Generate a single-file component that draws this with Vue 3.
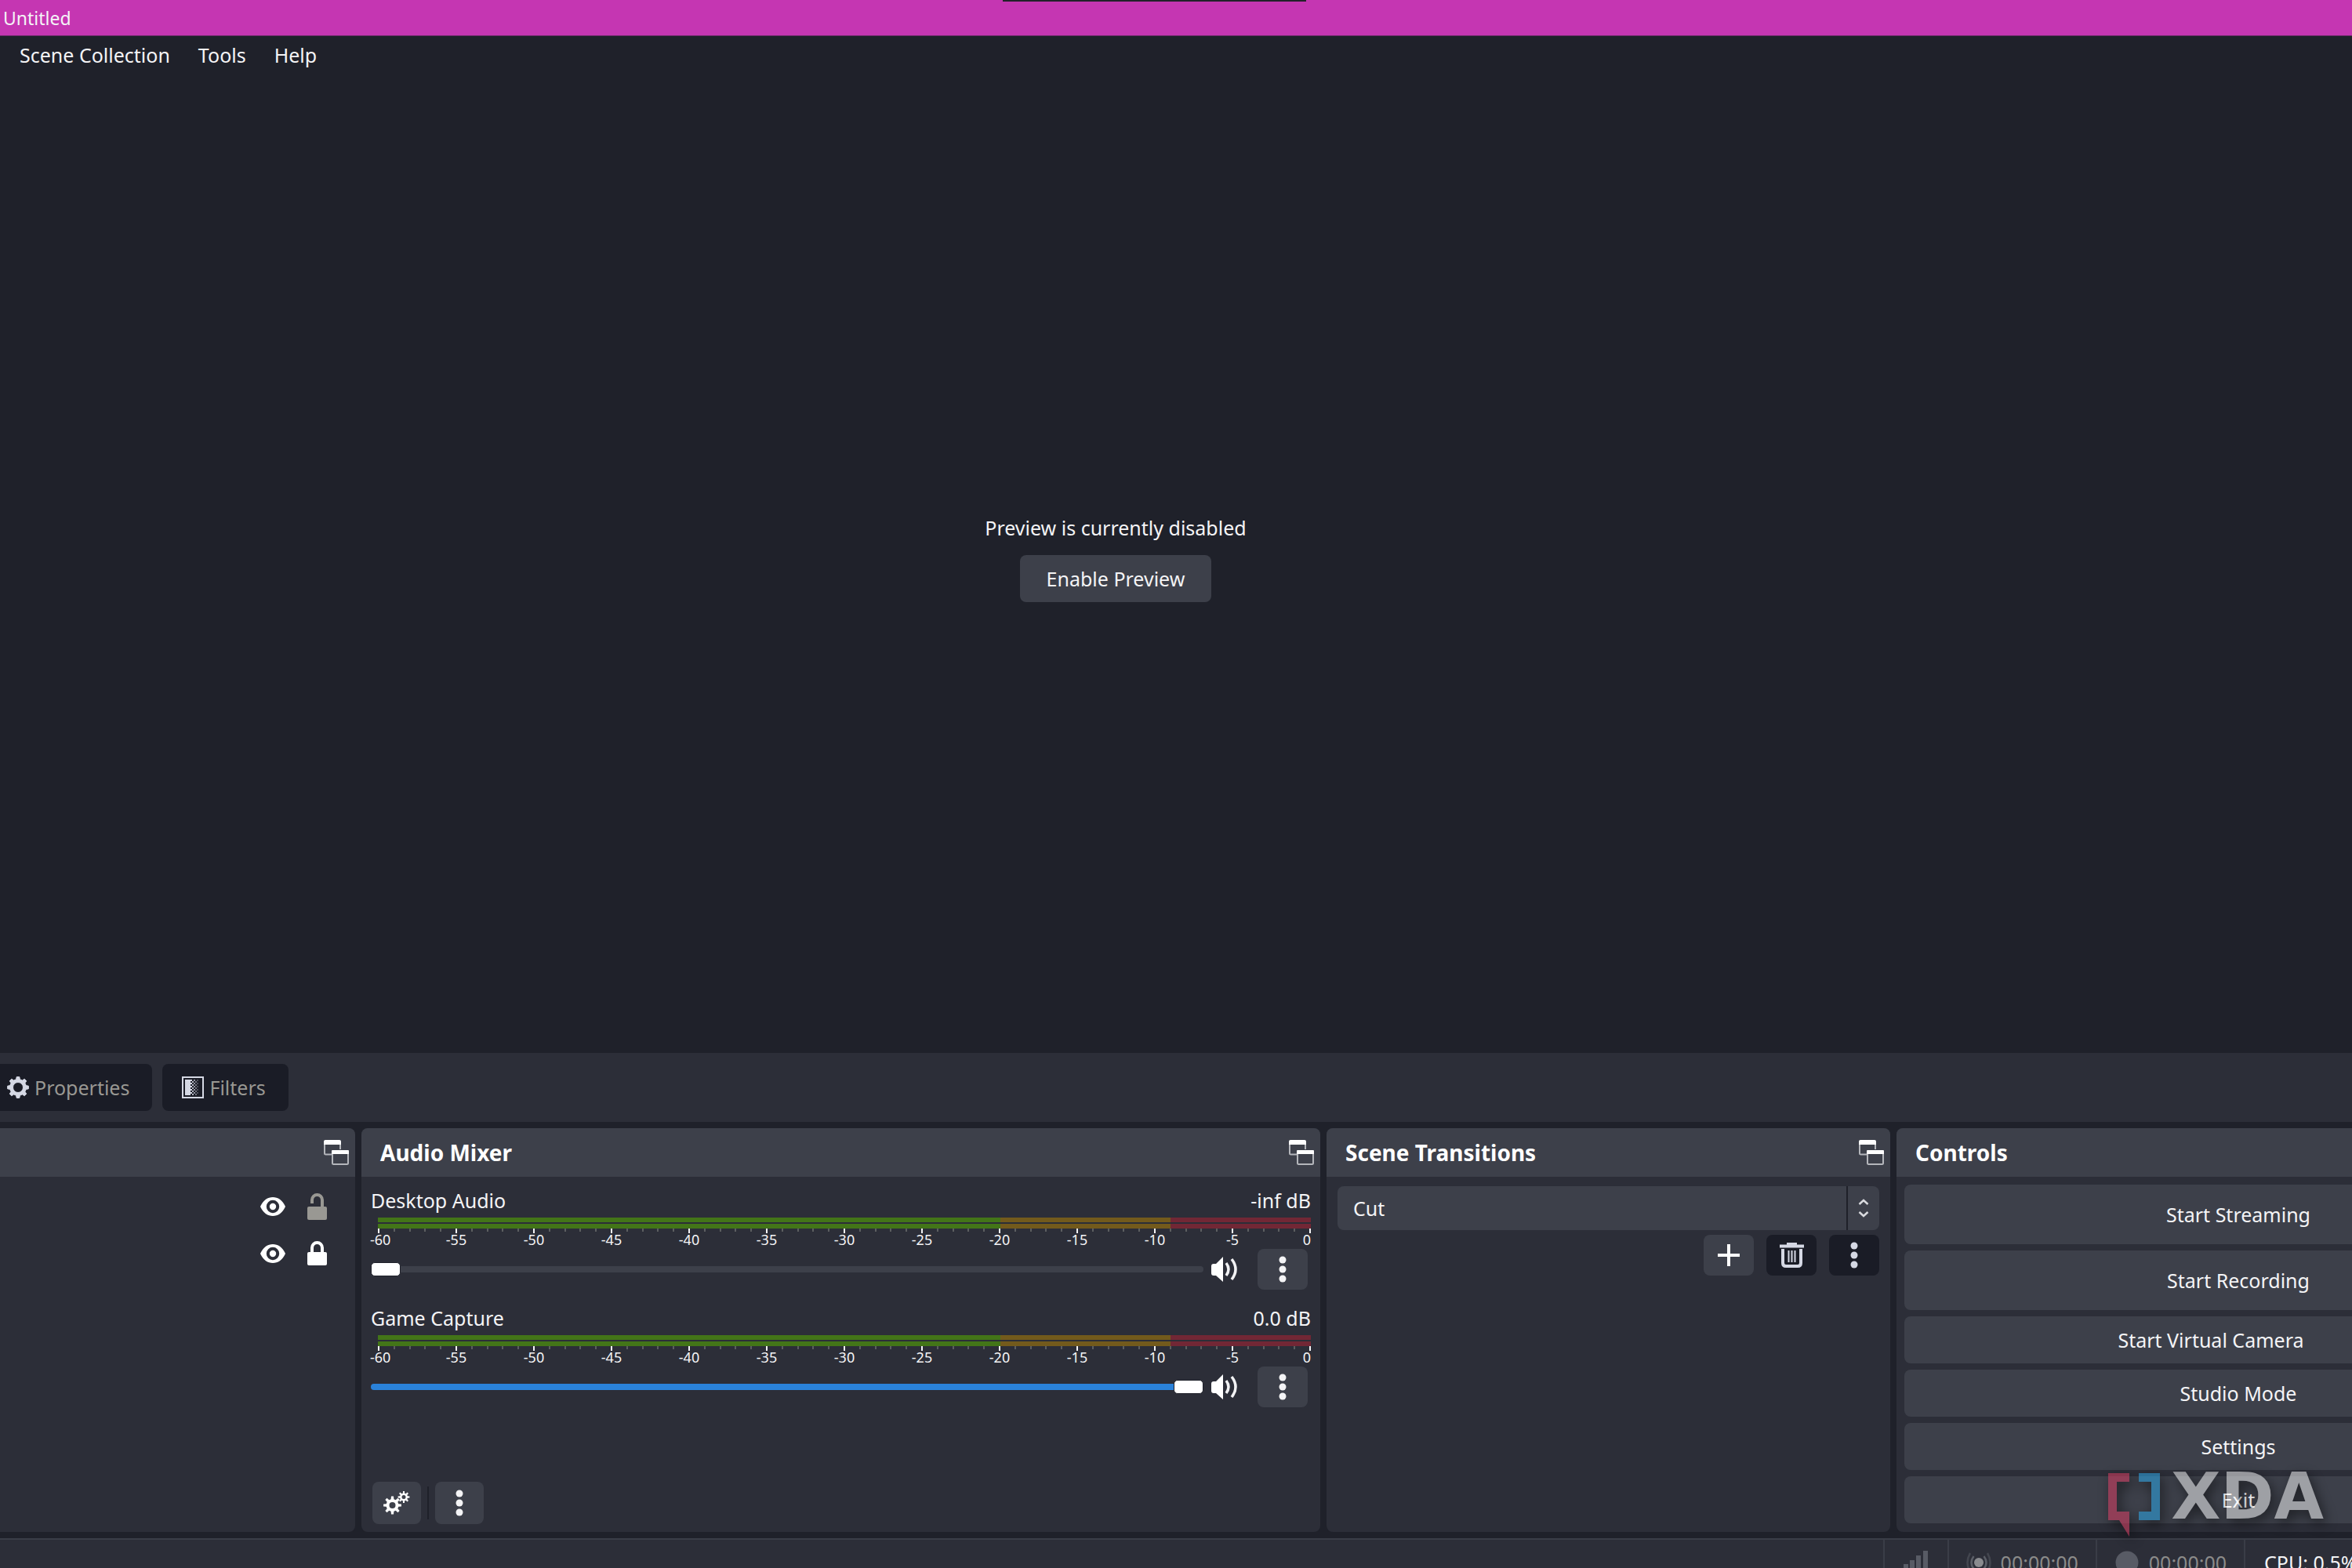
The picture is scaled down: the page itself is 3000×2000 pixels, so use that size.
<script setup>
import { reactive, ref } from 'vue';

const menus = ['Scene Collection', 'Tools', 'Help'];

const sources = reactive([
    { id: 1, visible: true, locked: false },
    { id: 2, visible: true, locked: true },
]);

const channels = reactive([
    { id: 'desktop', name: 'Desktop Audio', db: '-inf dB', volume: 0 },
    { id: 'game', name: 'Game Capture', db: '0.0 dB', volume: 100 },
]);

const transition = ref('Cut');

// One tick per dB, a label on every fifth.
const ticks = Array.from({ length: 61 }, (_, i) => ({
    db: i - 60,
    left: `${(i / 60) * 100}%`,
    major: i % 5 === 0,
}));

// Dots of the dithered half of the filters icon.
const dither = [];
for (let row = 0; row < 10; row++) {
    for (let col = 0; col < 5; col++) {
        if ((row + col) % 2 === 0) {
            dither.push({ x: 11 + col * 2, y: 4 + row * 2, o: 1 - col * 0.18 });
        }
    }
}

// Cog outline with a round hole (needs fill-rule evenodd).
function cog(cx, cy, outer, inner, hole, teeth = 8) {
    const step = (Math.PI * 2) / teeth;
    const points = [];
    for (let i = 0; i < teeth; i++) {
        const a = i * step - Math.PI / 2;
        [[-0.3, inner], [-0.17, outer], [0.17, outer], [0.3, inner]].forEach(([k, r]) => {
            points.push(`${(cx + r * Math.cos(a + k * step)).toFixed(2)} ${(cy + r * Math.sin(a + k * step)).toFixed(2)}`);
        });
    }

    return `M${points.join('L')}ZM${cx - hole} ${cy}a${hole} ${hole} 0 1 0 ${hole * 2} 0a${hole} ${hole} 0 1 0 ${-hole * 2} 0Z`;
}
</script>

<template>
    <div class="app">
        <header class="titlebar">
            Untitled
            <span class="titlebar-notch"></span>
        </header>

        <nav class="menubar">
            <button v-for="m in menus" :key="m" type="button" class="menu">{{ m }}</button>
        </nav>

        <main class="preview">
            <p class="preview-text">Preview is currently disabled</p>
            <button type="button" class="btn preview-btn">Enable Preview</button>
        </main>

        <div class="context-bar">
            <button type="button" class="btn dark context-btn properties">
                <svg width="28" height="28" viewBox="0 0 28 28">
                    <path :d="cog(14, 14, 13.5, 10.5, 6.5)" fill="#d5d8e4" stroke="#d5d8e4" stroke-linejoin="round" fill-rule="evenodd" />
                </svg>
                Properties
            </button>
            <button type="button" class="btn dark context-btn">
                <svg width="28" height="28" viewBox="0 0 28 28" fill="#d5d8e4">
                    <rect x="1" y="1" width="26" height="26" fill="none" stroke="#d5d8e4" stroke-width="2" />
                    <rect x="4" y="4" width="7" height="20" />
                    <rect v-for="(d, i) in dither" :key="i" :x="d.x" :y="d.y" width="2" height="2" :opacity="d.o" />
                </svg>
                Filters
            </button>
        </div>

        <div class="docks">
            <section class="dock dock-sources">
                <div class="dock-head">
                    <span></span>
                    <button type="button" class="plain" aria-label="Pop out">
                        <svg class="popout" width="32" height="32" viewBox="0 0 32 32"><use href="#popout" /></svg>
                    </button>
                </div>
                <ul class="sources">
                    <li v-for="s in sources" :key="s.id" class="source">
                        <button type="button" class="plain" aria-label="Visibility" @click="s.visible = !s.visible">
                            <svg width="32" height="26" viewBox="0 0 32 26">
                                <path d="M0 13C4 4.500 9.500 1 16 1s12 3.500 16 12c-4 8.500-9.500 12-16 12S4 21.500 0 13Z" fill="#fff" />
                                <circle cx="16" cy="13" r="6.200" fill="#fff" stroke="#2c2e38" stroke-width="4" />
                            </svg>
                        </button>
                        <button type="button" class="plain" aria-label="Lock" @click="s.locked = !s.locked">
                            <svg v-if="s.locked" width="25" height="34" viewBox="0 0 25 34">
                                <path d="M6 17v-7.500a6.500 6.500 0 0 1 13 0V17" fill="none" stroke="#fff" stroke-width="4" />
                                <rect y="15" width="25" height="17" rx="2" fill="#fff" />
                            </svg>
                            <svg v-else width="25" height="34" viewBox="0 0 25 34">
                                <path d="M6 13V8.500a6.500 6.500 0 0 1 13 0V18" fill="none" stroke="#999893" stroke-width="4" />
                                <rect y="17" width="25" height="17" rx="2" fill="#999893" />
                            </svg>
                        </button>
                    </li>
                </ul>
            </section>

            <section class="dock">
                <div class="dock-head">
                    <h2>Audio Mixer</h2>
                    <button type="button" class="plain" aria-label="Pop out">
                        <svg class="popout" width="32" height="32" viewBox="0 0 32 32"><use href="#popout" /></svg>
                    </button>
                </div>
                <div class="mixer">
                    <div v-for="c in channels" :key="c.id" class="channel">
                        <div class="channel-head">
                            <label :for="c.id">{{ c.name }}</label>
                            <span>{{ c.db }}</span>
                        </div>
                        <div class="meter">
                            <div class="meter-bar"></div>
                            <div class="meter-bar"></div>
                            <div class="scale">
                                <span
                                    v-for="t in ticks"
                                    :key="t.db"
                                    class="tick"
                                    :class="{ major: t.major }"
                                    :style="{ left: t.left }"
                                ><span v-if="t.major" class="tick-label" :class="{ first: t.db === -60, last: t.db === 0 }">{{ t.db }}</span></span>
                            </div>
                        </div>
                        <div class="channel-row">
                            <input
                                :id="c.id"
                                v-model.number="c.volume"
                                type="range"
                                min="0"
                                max="100"
                                class="slider"
                                :style="{ '--fill': c.volume + '%' }"
                            >
                            <button type="button" class="plain speaker" aria-label="Mute">
                                <svg width="34" height="34" viewBox="0 0 34 34">
                                    <path d="M0 13q0-3 3-3h3l9-9v32l-9-8H3q-3 0-3-3Z" fill="#fff" />
                                    <path d="M19 9q6 8 0 16M26 4q10 13 0 26" fill="none" stroke="#f2f2f4" stroke-width="3.500" />
                                </svg>
                            </button>
                            <button type="button" class="btn icon-btn" aria-label="Channel options">
                                <svg width="10" height="34" viewBox="0 0 10 34"><use href="#dots" /></svg>
                            </button>
                        </div>
                    </div>
                    <div class="mixer-foot">
                        <button type="button" class="btn foot-btn" aria-label="Advanced audio properties">
                            <svg width="34" height="30" viewBox="0 0 34 30" fill="#fff" fill-rule="evenodd">
                                <path :d="cog(11.5, 18, 11.5, 8, 4)" />
                                <path :d="cog(26, 7.5, 7.5, 5, 2.5)" />
                            </svg>
                        </button>
                        <span class="sep"></span>
                        <button type="button" class="btn foot-btn" aria-label="Mixer menu">
                            <svg width="10" height="34" viewBox="0 0 10 34"><use href="#dots" /></svg>
                        </button>
                    </div>
                </div>
            </section>

            <section class="dock">
                <div class="dock-head">
                    <h2>Scene Transitions</h2>
                    <button type="button" class="plain" aria-label="Pop out">
                        <svg class="popout" width="32" height="32" viewBox="0 0 32 32"><use href="#popout" /></svg>
                    </button>
                </div>
                <div class="transitions">
                    <div class="select-wrap">
                        <select v-model="transition" aria-label="Transition">
                            <option>Cut</option>
                            <option>Fade</option>
                        </select>
                        <span class="select-arrows">
                            <svg width="14" height="24" viewBox="0 0 14 24">
                                <path d="M1.500 7 7 2l5.500 5M1.500 17 7 22l5.500-5" fill="none" stroke="#d9dade" stroke-width="2.500" />
                            </svg>
                        </span>
                    </div>
                    <div class="transition-tools">
                        <button type="button" class="btn icon-btn" aria-label="Add">
                            <svg width="28" height="28" viewBox="0 0 28 28">
                                <path d="M14 0v28M0 14h28" stroke="#fff" stroke-width="4" />
                            </svg>
                        </button>
                        <button type="button" class="btn dark icon-btn" aria-label="Remove">
                            <svg width="31" height="34" viewBox="0 0 31 34" fill="none" stroke="#d5d8e4">
                                <path d="M9 2.500h13" stroke-width="3" />
                                <path d="M0 5.500h31" stroke-width="4" />
                                <path d="M4 9v18q0 4 4 4h15q4 0 4-4V9" stroke-width="4" />
                                <path d="M11.500 11v15M15.500 11v15M19.500 11v15" stroke-width="2" />
                            </svg>
                        </button>
                        <button type="button" class="btn dark icon-btn muted" aria-label="Transition options">
                            <svg width="10" height="34" viewBox="0 0 10 34"><use href="#dots" /></svg>
                        </button>
                    </div>
                </div>
            </section>

            <section class="dock">
                <div class="dock-head"><h2>Controls</h2></div>
                <div class="controls">
                    <button type="button" class="btn tall">Start Streaming</button>
                    <button type="button" class="btn tall">Start Recording</button>
                    <div class="control-pair">
                        <button type="button" class="btn">Start Virtual Camera</button>
                        <button type="button" class="btn" aria-label="Virtual camera settings"></button>
                    </div>
                    <button type="button" class="btn">Studio Mode</button>
                    <button type="button" class="btn">Settings</button>
                    <button type="button" class="btn">Exit</button>
                </div>
            </section>
        </div>

        <footer class="status">
            <div class="status-item signal">
                <svg width="32" height="30" viewBox="0 0 32 30" fill="#585b65">
                    <path d="M0 17h6v13H0zM8 12h6v18H8zM16 6h6v24h-6zM25 0h6v30h-6z" />
                </svg>
            </div>
            <div class="status-item">
                <svg width="32" height="32" viewBox="0 0 32 32" fill="none" stroke="#5b5e67" stroke-width="2.500">
                    <circle cx="16" cy="16" r="6" fill="#8a8b8f" stroke="none" />
                    <path d="M9.500 8q-6 8 0 16M22.500 8q6 8 0 16" />
                    <path d="M5 4q-7 12 0 24M27 4q7 12 0 24" stroke="#43464f" />
                </svg>
                00:00:00
            </div>
            <div class="status-item">
                <svg width="32" height="32" viewBox="0 0 32 32"><circle cx="16" cy="16" r="14.500" fill="#585b65" /></svg>
                00:00:00
            </div>
            <div class="status-item cpu">CPU: 0.5%</div>
        </footer>

        <div class="watermark">
            <svg width="66" height="81" viewBox="0 0 66 81">
                <path d="M0 0h27v11H11v38h16v32L14 60H0Z" fill="#e53e65" />
                <path d="M39 0h27v60H39V49h16V11H39Z" fill="#2bb0f5" />
            </svg>
            <span>XDA</span>
        </div>

        <svg class="defs" width="0" height="0" aria-hidden="true">
            <symbol id="popout" viewBox="0 0 32 32">
                <path d="M1 2v15q0 1.500 1.500 1.500H10M21 4v8" fill="none" stroke="#b4b6bb" stroke-width="2" />
                <path d="M0 6V2q0-2 2-2h18q2 0 2 2v4Z" fill="#fff" />
                <path d="M11 17v12.500q0 1.500 1.500 1.500h17q1.500 0 1.500-1.500V17" fill="none" stroke="#b4b6bb" stroke-width="2" />
                <path d="M10 18v-4q0-1 1-1h20q1 0 1 1v4Z" fill="#fff" />
            </symbol>
            <symbol id="dots" viewBox="0 0 10 34">
                <circle cx="5" cy="5" r="4.500" fill="currentColor" />
                <circle cx="5" cy="17" r="4.500" fill="currentColor" />
                <circle cx="5" cy="29" r="4.500" fill="currentColor" />
            </symbol>
        </svg>
    </div>
</template>

<style>
html,
body {
    margin: 0;
    overflow: hidden;
    background: #1f212a;
}
</style>

<style scoped>
.app {
    position: relative;
    display: flex;
    flex-direction: column;
    height: 100vh;
    overflow: hidden;
    background: #1f212a;
    color: #f4f4f6;
    font-family: "Noto Sans", "Open Sans", sans-serif;
    font-size: 25px;
    line-height: 34px;
}

button,
select {
    font: inherit;
    color: inherit;
    border: 0;
    margin: 0;
}

svg {
    display: block;
    flex: none;
}

.defs {
    position: absolute;
}

.plain {
    padding: 0;
    background: none;
}

.btn {
    display: flex;
    align-items: center;
    justify-content: center;
    height: 60px;
    padding: 0;
    border-radius: 8px;
    background: #3d404a;
}

.btn.dark {
    background: #1a1c26;
}

.btn.muted {
    color: #d5d8e4;
}

.icon-btn {
    width: 64px;
    height: 52px;
}

/* title + menu */
.titlebar {
    position: relative;
    flex: none;
    height: 46px;
    padding-left: 4px;
    background: #c536b2;
    border-bottom: 1px solid #6f2b6c;
    box-sizing: border-box;
    font-size: 23px;
    line-height: 46px;
}

.titlebar-notch {
    position: absolute;
    top: 0;
    left: 1279px;
    width: 387px;
    height: 2px;
    background: #222129;
}

.menubar {
    display: flex;
    flex: none;
    height: 50px;
    padding-left: 7px;
}

.menu {
    padding: 0 18px 2px;
    background: none;
}

/* preview */
.preview {
    display: flex;
    flex: 1;
    flex-direction: column;
    align-items: center;
    justify-content: center;
    gap: 18px;
    padding: 0 154px 16px 0;
}

.preview-text {
    margin: 0;
}

.preview-btn {
    padding: 0 34px;
}

/* context bar */
.context-bar {
    display: flex;
    flex: none;
    gap: 13px;
    padding: 14px 0;
    background: #2c2e38;
}

.context-btn {
    gap: 7px;
    padding: 0 29px 0 25px;
    color: #999893;
}

.properties {
    margin-left: -16px;
}

/* docks */
.docks {
    display: grid;
    flex: none;
    grid-template-columns: 453fr 1223fr 719fr 872fr;
    gap: 8px;
    width: calc(100% + 291px);
    padding: 8px 0;
}

.dock {
    display: flex;
    flex-direction: column;
    min-width: 0;
    border-radius: 8px;
    background: #2c2e38;
    overflow: hidden;
}

.dock-sources {
    border-radius: 0 8px 8px 0;
}

.dock-head {
    display: flex;
    align-items: center;
    justify-content: space-between;
    height: 62px;
    padding: 0 8px 0 24px;
    background: #3d404a;
}

.dock-head h2 {
    margin: 0;
    font-size: 28px;
    font-weight: 700;
    color: #fff;
}

.sources {
    margin: 0;
    padding: 8px 36px 0 0;
    list-style: none;
}

.source {
    display: flex;
    align-items: center;
    justify-content: flex-end;
    gap: 28px;
    height: 60px;
}

/* mixer */
.mixer {
    display: flex;
    flex: 1;
    flex-direction: column;
    padding: 0 12px 10px;
}

.channel {
    padding: 13px 0 6px;
}

.channel-head {
    display: flex;
    justify-content: space-between;
}

.meter {
    display: grid;
    gap: 2px;
    margin: 5px 0 0 9px;
}

.meter-bar {
    height: 6px;
    background: linear-gradient(to right, #437518 66.7%, #735a1c 66.7% 85%, #722735 85%);
}

.scale {
    position: relative;
    height: 24px;
    margin: 0 1px;
}

.tick {
    position: absolute;
    top: -2px;
    width: 2px;
    height: 4px;
    margin-left: -1px;
    background: #5c5e60;
}

.tick.major {
    height: 6px;
    background: #f4f4f6;
}

.tick-label {
    position: absolute;
    top: 4px;
    left: 50%;
    font-size: 18px;
    line-height: 20px;
    transform: translateX(-50%);
}

.tick-label.first {
    left: -10px;
    transform: none;
}

.tick-label.last {
    right: 0;
    left: auto;
    transform: none;
}

.channel-row {
    display: flex;
    align-items: center;
    padding-right: 4px;
}

.slider {
    flex: 1;
    height: 18px;
    margin: 0 10px 0 0;
    background: none;
    appearance: none;
}

.slider::-webkit-slider-runnable-track {
    height: 8px;
    border-radius: 4px;
    background: linear-gradient(to right, #2a82da var(--fill), #3d404a var(--fill));
}

.slider::-webkit-slider-thumb {
    width: 38px;
    height: 18px;
    margin-top: -5px;
    border: 1px solid #1f212a;
    border-radius: 5px;
    background: #fff;
    appearance: none;
    box-sizing: border-box;
}

.speaker {
    margin-right: 25px;
}

.mixer-foot {
    display: flex;
    align-items: center;
    gap: 8px;
    margin-top: auto;
    padding-left: 2px;
}

.foot-btn {
    width: 62px;
    height: 54px;
}

.sep {
    width: 2px;
    height: 42px;
    background: #1f212a;
}

/* transitions */
.transitions {
    padding: 12px 14px;
}

.select-wrap {
    position: relative;
}

.select-wrap select {
    display: block;
    width: 100%;
    height: 56px;
    padding: 0 60px 0 20px;
    border-radius: 8px;
    background: #3d404a;
    appearance: none;
}

.select-arrows {
    position: absolute;
    top: 0;
    right: 0;
    display: flex;
    align-items: center;
    justify-content: center;
    width: 40px;
    height: 56px;
    border-left: 2px solid #1f212a;
    pointer-events: none;
}

.transition-tools {
    display: flex;
    justify-content: flex-end;
    gap: 16px;
    margin-top: 6px;
}

/* controls */
.controls {
    display: flex;
    flex-direction: column;
    gap: 8px;
    padding: 10px 10px 11px;
}

.tall {
    height: 76px;
}

.control-pair {
    display: grid;
    grid-template-columns: 1fr 62px;
    gap: 8px;
}

/* status */
.status {
    display: flex;
    flex: none;
    justify-content: flex-end;
    height: 58px;
    margin-bottom: -22px;
    border-top: 2px solid #3a3d47;
    background: #2c2e38;
}

.status-item {
    display: flex;
    align-items: center;
    gap: 12px;
    padding: 0 22px;
    border-left: 2px solid #3a3d47;
    color: #8b8b8a;
}

.signal {
    padding: 0 24px;
}

.cpu {
    width: 88px;
    padding: 0 24px;
    color: #f4f4f6;
    white-space: nowrap;
}

.watermark {
    position: absolute;
    right: 36px;
    bottom: 40px;
    display: flex;
    gap: 14px;
    opacity: 0.5;
    filter: drop-shadow(4px 6px 8px #000);
    pointer-events: none;
}

.watermark span {
    color: #fff;
    font-family: "DejaVu Sans", sans-serif;
    font-size: 82px;
    font-weight: 700;
    line-height: 60px;
}
</style>
